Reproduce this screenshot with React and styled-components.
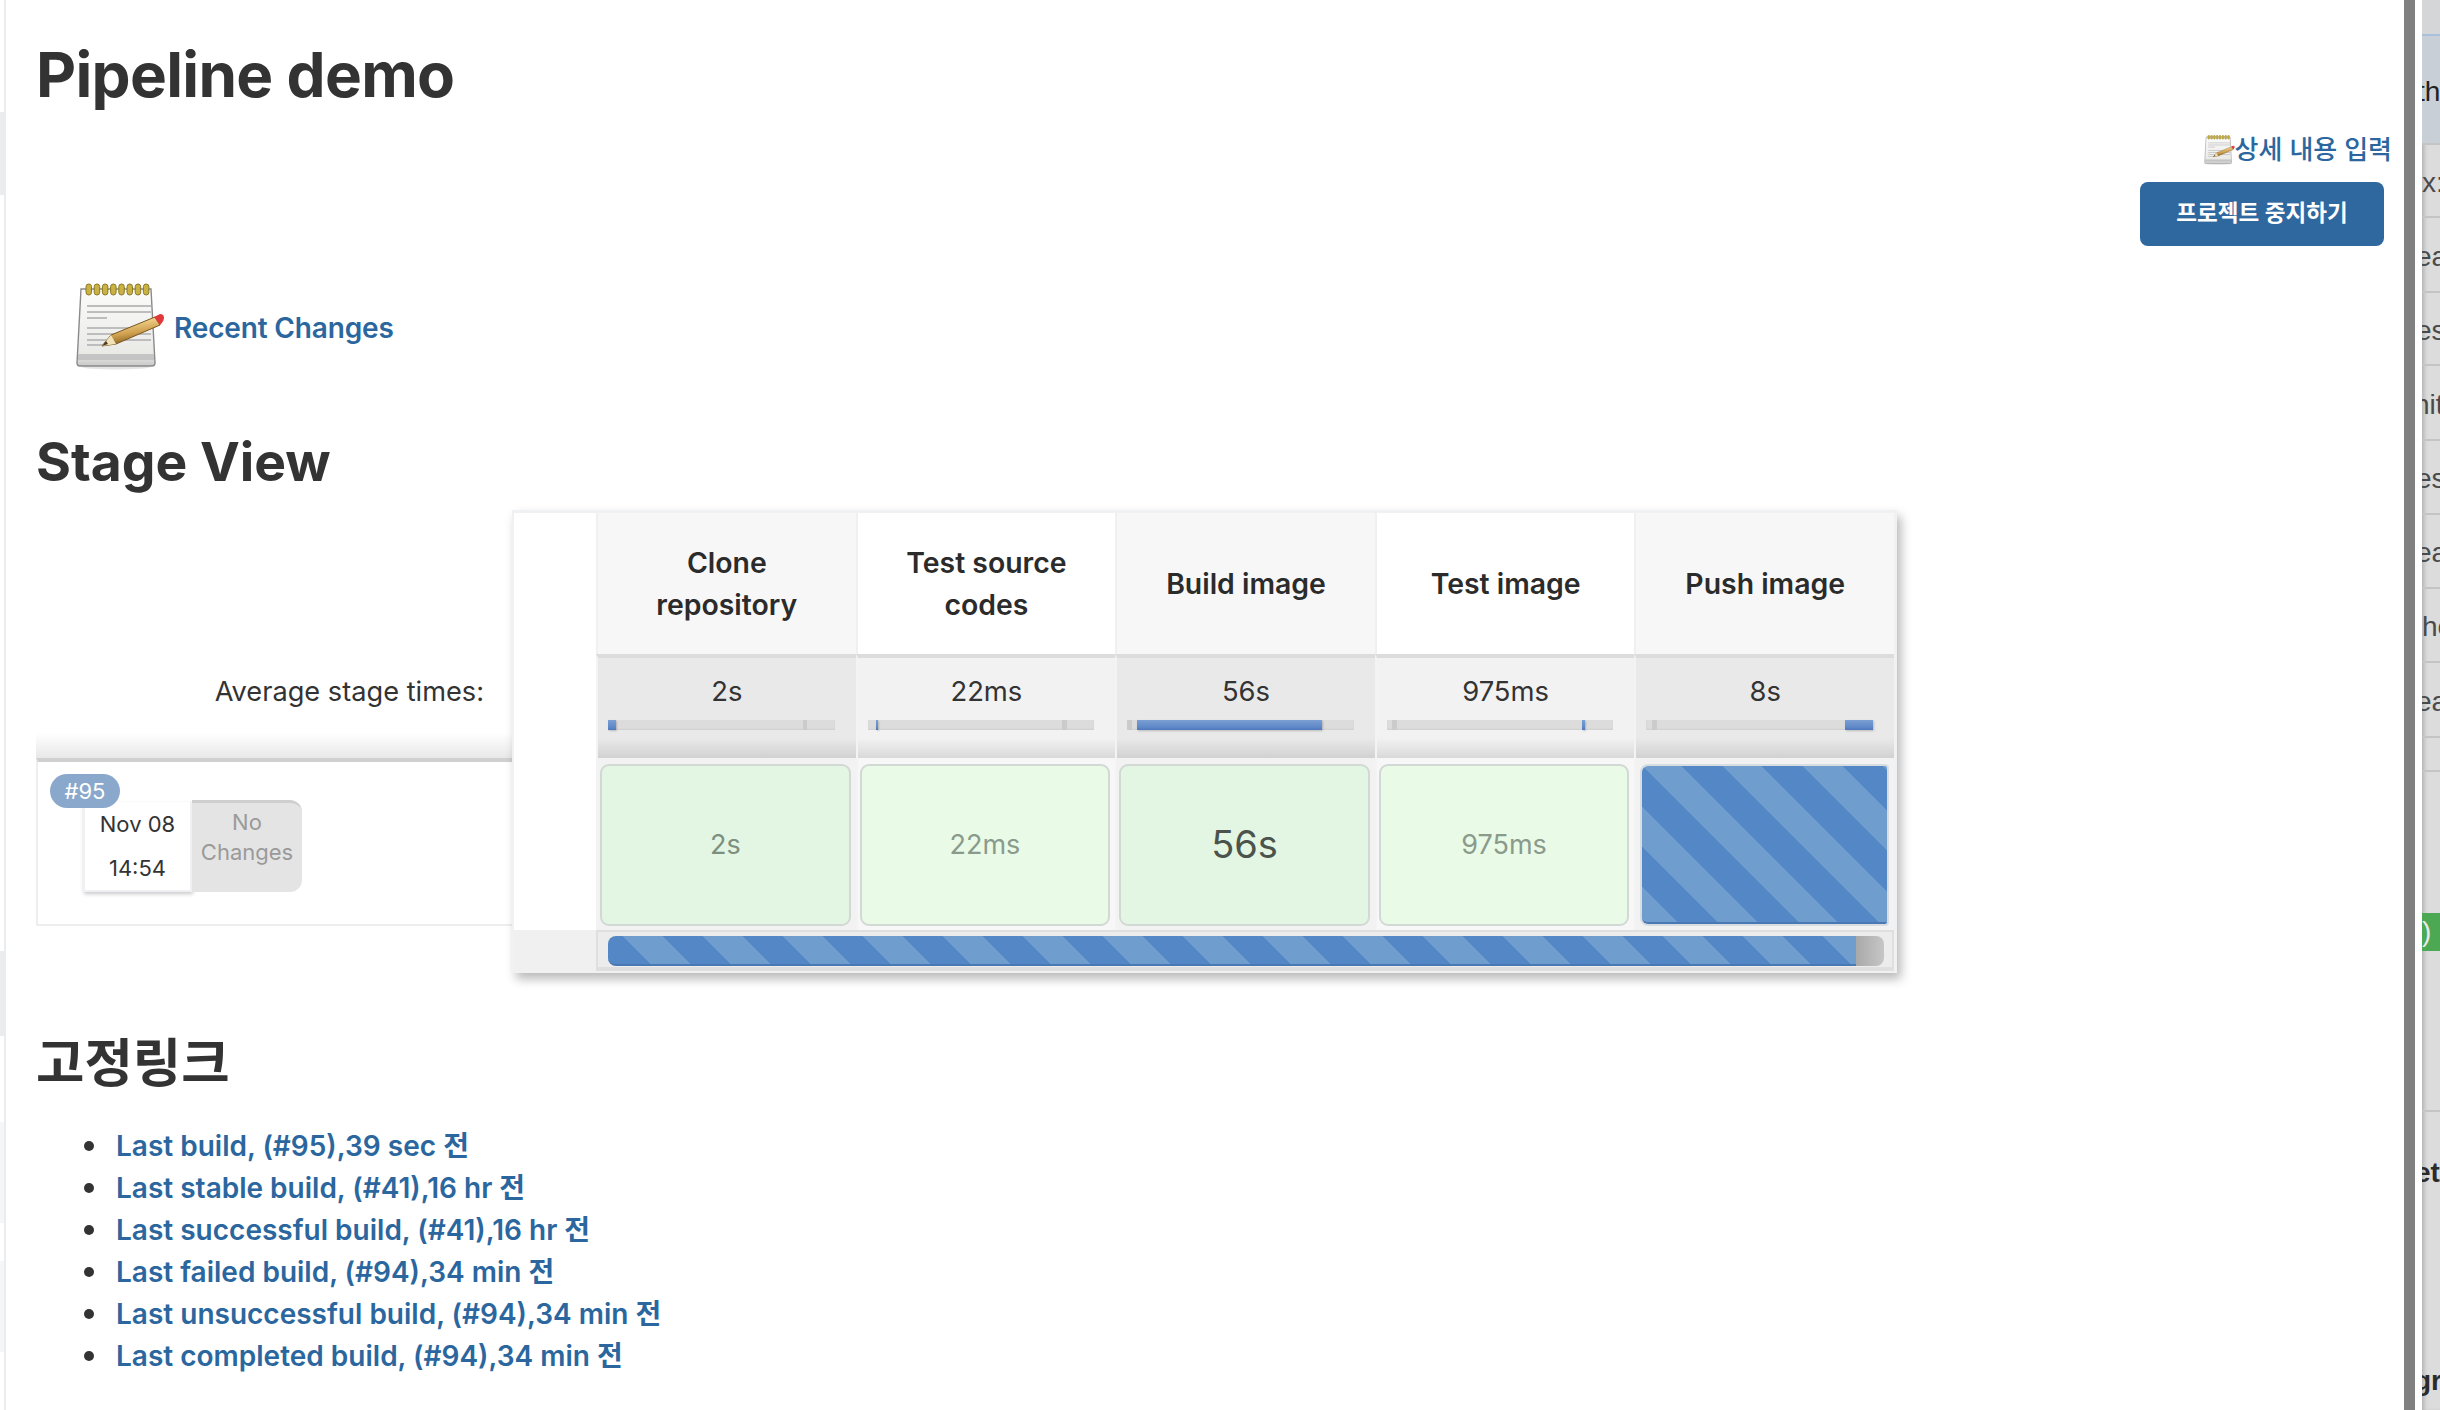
import React from "react";
import styled, { createGlobalStyle } from "styled-components";

const GlobalStyle = createGlobalStyle`
  html, body {
    margin: 0;
    padding: 0;
    background: #fff;
    overflow: hidden;
  }
  body {
    font-family: Inter, "Noto Sans CJK KR", sans-serif;
    color: #333;
  }
`;

const Page = styled.div`
  display: flex;
  width: 2440px;
  height: 1410px;
  overflow: hidden;
`;

const EdgeStrip = styled.div`
  width: 6px;
  flex: none;
  box-sizing: border-box;
  border-right: 2px solid #e9edf0;
  display: flex;
  flex-direction: column;
`;

const EdgePatch = styled.div`
  height: ${props => props.$h}px;
  background: ${props => props.$bg || "#fff"};
`;

const Main = styled.main`
  flex: 1;
  min-width: 0;
  padding: 37px 12px 0 30px;
`;

const PageTitle = styled.h1`
  margin: 0;
  font-size: 62px;
  line-height: 76px;
  font-weight: 700;
  letter-spacing: -0.7px;
`;

const Actions = styled.div`
  margin-top: 21px;
  display: flex;
  flex-direction: column;
  align-items: flex-end;
`;

const EditLink = styled.a`
  display: flex;
  align-items: center;
  color: #2b679e;
  font-size: 26px;
  font-weight: 500;
  line-height: 32px;
  height: 32px;
`;

const StopButton = styled.button`
  margin: 16px 8px 0 0;
  width: 244px;
  height: 64px;
  border: 0;
  border-radius: 8px;
  padding: 0 0 6px;
  background: #2f689f;
  color: #fff;
  font-family: inherit;
  font-size: 22.5px;
  font-weight: 600;
`;

const RecentRow = styled.div`
  margin: 37px 0 0 39px;
  display: flex;
  align-items: center;
  gap: 9px;
`;

const RecentLink = styled.a`
  color: #2b679e;
  font-size: 28px;
  font-weight: 600;
  letter-spacing: -0.15px;
  line-height: 36px;
  margin-top: 3px;
`;

const SectionTitle = styled.h2`
  margin: ${props => props.$top}px 0 0;
  font-size: ${props => props.$size}px;
  line-height: 64px;
  font-weight: 700;
`;

const StageSection = styled.section`
  margin-top: 16px;
  display: flex;
  align-items: flex-start;
`;

const BuildSide = styled.div`
  width: 476px;
  flex: none;
  padding-top: 165px;
`;

const AverageLabel = styled.div`
  text-align: right;
  padding-right: 28px;
  font-size: 27.2px;
  line-height: 34px;
  height: 55px;
`;

const RowFade = styled.div`
  height: 28px;
  background: linear-gradient(#fff 10%, #e8e8e8);
`;

const BuildRow = styled.div`
  height: 168px;
  box-sizing: border-box;
  border-top: 4px solid #d0d0d0;
  border-left: 2px solid #eee;
  border-bottom: 2px solid #eee;
  padding: 12px 0 0 12px;
`;

const BuildBadge = styled.div`
  position: relative;
  z-index: 1;
  width: 70px;
  height: 34px;
  border-radius: 17px;
  background: #8aa8cb;
  color: #fff;
  font-size: 22px;
  line-height: 34px;
  text-align: center;
`;

const BuildCard = styled.div`
  display: flex;
  margin: -6px 0 0 33px;
`;

const DateBox = styled.div`
  width: 109px;
  height: 90px;
  box-sizing: border-box;
  background: #fff;
  border: 2px solid #eef0f3;
  border-top: 0;
  box-shadow: 1px 2px 4px rgba(0, 0, 0, 0.22);
  text-align: center;
  font-size: 22px;
  line-height: 44px;
`;

const ChangesBox = styled.div`
  width: 110px;
  height: 92px;
  margin-top: -2px;
  box-sizing: border-box;
  background: #e4e4e4;
  border-top: 3px solid #cfcfcf;
  border-radius: 0 12px 12px 0;
  color: #9a9a9a;
  text-align: center;
  font-size: 22px;
  line-height: 30px;
  padding-top: 4px;
`;

const Panel = styled.div`
  flex: none;
  width: 1385px;
  height: 463px;
  box-sizing: border-box;
  border: solid #f0f1f3;
  border-width: 3px 3px 2px 2px;
  background: #fff;
  box-shadow: 4px 6px 10px rgba(0, 0, 0, 0.28);
  display: grid;
  grid-template-columns: 82px repeat(5, 1fr);
  grid-template-rows: 141px 104px 172px 41px;
`;

const CornerCell = styled.div`
  grid-column: 1;
  grid-row: 1 / span 3;
  background: #fff;
`;

const HeadCell = styled.div`
  display: flex;
  align-items: center;
  justify-content: center;
  text-align: center;
  padding: 0 20px;
  background: ${props => (props.$odd ? "#f7f7f7" : "#fff")};
  border-left: 2px solid #f0f0f0;
  font-size: 28.4px;
  font-weight: 600;
  line-height: 42px;
  color: #2b2b2b;
`;

const AvgCell = styled.div`
  box-sizing: border-box;
  background:
    linear-gradient(rgba(0, 0, 0, 0) 80px, rgba(0, 0, 0, 0.1) 100%),
    ${props => (props.$odd ? "#e9e9e9" : "#f2f2f2")};
  border-top: 4px solid #dcdcdc;
  border-left: 2px solid #f3f3f3;
  text-align: center;
  font-size: 27.4px;
  line-height: 34px;
  padding-top: 16px;
`;

const Track = styled.div`
  position: relative;
  margin: 12px 21px 0 10px;
  height: 10px;
  background: #dcdcdc;
  box-shadow: inset 0 -1px 2px rgba(0, 0, 0, 0.06);
`;

const TrackMark = styled.div`
  position: absolute;
  top: 0;
  bottom: 0;
  background: #cbcbcb;
`;

const TrackFill = styled.div`
  position: absolute;
  top: 0;
  bottom: 0;
  background: linear-gradient(#7b9fd2, #5f89c9 70%, #4f78bb);
  box-shadow: 1px 1px 2px rgba(0, 0, 0, 0.2);
`;

const StageCell = styled.div`
  background: ${props => (props.$odd ? "#f2f2f2" : "#f7f7f7")};
  border-left: 2px solid #f3f3f3;
  padding: 6px 5px 4px 2px;
  display: flex;
`;

const StageBox = styled.div`
  flex: 1;
  box-sizing: border-box;
  display: flex;
  align-items: center;
  justify-content: center;
  padding-bottom: 2px;
  border: 2px solid #d2d8d4;
  border-radius: 9px;
  background: ${props => props.$bg};
  color: ${props => props.$ink};
  font-size: ${props => props.$size}px;
`;

const RunningBox = styled.div`
  flex: 1;
  border-radius: 6px 2px 2px 6px;
  background: repeating-linear-gradient(45deg, #6e9dce 0 25.45px, #5487c5 25.45px 53.74px, #6e9dce 53.74px 56.57px);
  border-bottom: 2px solid #4a78b4;
  box-shadow: 0 0 0 2px #d8dde2;
  margin: 2px 2px 2px 4px;
`;

const FootCorner = styled.div`
  background: #f0f0f0;
`;

const FootBar = styled.div`
  grid-column: 2 / span 5;
  background: #ececec;
  border: 2px solid #dfdfdf;
  border-bottom-width: 4px;
  padding: 4px 8px 2px 10px;
  display: flex;
`;

const FootProgress = styled.div`
  flex: 1;
  height: 30px;
  border-radius: 8px 0 0 8px;
  background: repeating-linear-gradient(45deg, #6e9dce 0 2.08px, #5487c5 2.08px 30.36px, #6e9dce 30.36px 56.57px);
  border-bottom: 2px solid #4a78b4;
  box-sizing: border-box;
`;

const FootRest = styled.div`
  width: 28px;
  height: 30px;
  border-radius: 0 8px 8px 0;
  background: linear-gradient(90deg, #a9a9a9, #c6c6c6);
`;

const LinkList = styled.ul`
  margin: 30px 0 0;
  padding: 0 0 0 48px;
  list-style: none;
  font-size: 28px;
  line-height: 42px;
  font-weight: 600;
`;

const LinkItem = styled.li`
  display: flex;
  align-items: center;

  &::before {
    content: "";
    width: 10px;
    height: 10px;
    border-radius: 50%;
    background: #333;
    margin-right: 22px;
  }
`;

const PermaLink = styled.a`
  color: #2b679e;
`;

const Divider = styled.div`
  width: 11px;
  flex: none;
  background: #808080;
`;

const Gap = styled.div`
  width: 7px;
  flex: none;
  background: #fff;
`;

const Peek = styled.aside`
  flex: none;
  width: 18px;
  overflow: hidden;
  background: #dcdcdc;
  box-shadow: inset 4px 0 4px -2px rgba(0, 0, 0, 0.2);
  display: flex;
  flex-direction: column;
  font-family: "Liberation Sans", sans-serif;
  font-size: 28px;
  color: #4a4a4a;
`;

const PeekRow = styled.div`
  height: ${props => props.$h}px;
  flex: none;
  box-sizing: border-box;
  display: flex;
  align-items: center;
  padding-top: ${props => (props.$h > 60 ? 4 : 0)}px;
  white-space: nowrap;
  text-indent: ${props => props.$indent || 0}px;
  background: ${props => props.$bg || "transparent"};
  color: ${props => props.$ink || "inherit"};
  font-weight: ${props => (props.$bold ? 700 : 400)};
  border-bottom: ${props => (props.$line ? `2px solid ${props.$line}` : "0")};
`;

function NoteIcon({ size }) {
  const rings = [0, 1, 2, 3, 4, 5, 6, 7];
  const lines = [
    [12, 22, 70],
    [12, 28, 70],
    [12, 34, 26],
    [12, 44, 70],
    [12, 50, 70],
    [12, 56, 70],
    [12, 61, 26],
  ];
  return (
    <svg width={size} height={(size * 87) / 90} viewBox="0 0 90 87">
      <defs>
        <linearGradient id="noteBody" x1="0" y1="0" x2="0" y2="1">
          <stop offset="0" stopColor="#fbfbfb" />
          <stop offset="0.85" stopColor="#e9e9e6" />
          <stop offset="1" stopColor="#c8c8c8" />
        </linearGradient>
        <linearGradient id="pencilBody" x1="0.35" y1="0" x2="0.65" y2="1">
          <stop offset="0.2" stopColor="#efd089" />
          <stop offset="0.55" stopColor="#cfa04e" />
          <stop offset="0.85" stopColor="#8f6628" />
        </linearGradient>
      </defs>
      <ellipse cx="41" cy="84" rx="34" ry="2.5" fill="#000" opacity="0.1" />
      <path d="M6 6h70l4 74q0 3-3 3H5q-3 0-3-3z" fill="url(#noteBody)" stroke="#8a8a8a" strokeWidth="1.4" />
      <rect x="3" y="71" width="76" height="6" fill="#c4c4c4" />
      {lines.map(l => (
        <rect key={l[1]} x={l[0]} y={l[1]} width={l[2] - 6} height="2" fill="#bdbdbd" />
      ))}
      {rings.map(i => (
        <rect key={i} x={11 + i * 8.2} y="1" width="5.5" height="11" rx="2.7" fill="#c9b144" stroke="#8c7a22" strokeWidth="1" />
      ))}
      <path d="M27 63l9-11 44-18 5 8-44 19z" fill="url(#pencilBody)" stroke="#7a5620" strokeWidth="1" />
      <path d="M27 63l9-11 5 9z" fill="#f2e2b8" />
      <path d="M27 63l4-5 2 3z" fill="#4a3a20" />
      <path d="M79 34l6-3q4 0 4 4 0 3-3 6l-1 1z" fill="#e0393b" />
    </svg>
  );
}

const stages = [
  { name: ["Clone", "repository"], avg: "2s", mark: 86, fillAt: 0, fill: 3.5, box: "#e3f6e3", ink: "#7d8f7f", size: 27 },
  { name: ["Test source", "codes"], avg: "22ms", mark: 86, fillAt: 3.5, fill: 1, box: "#e9fbe7", ink: "#8a9a8c", size: 27 },
  { name: ["Build image"], avg: "56s", mark: 0, fillAt: 4.4, fill: 81.5, box: "#e3f6e3", ink: "#4b534c", size: 38 },
  { name: ["Test image"], avg: "975ms", mark: 2.5, fillAt: 86, fill: 1.4, box: "#e9fbe7", ink: "#8a9a8c", size: 27 },
  { name: ["Push image"], avg: "8s", mark: 2.5, fillAt: 87.7, fill: 12.3, running: true },
];

const peekRows = [
  { h: 36, bg: "#d4d6d8", line: "#a9c0dc" },
  { h: 109, bg: "#c9cfd6", text: "th", indent: -5, ink: "#222", line: "#c4c4c4" },
  { h: 73, text: "x:", line: "#c4c4c4" },
  { h: 75, text: "ea", indent: -6, line: "#c4c4c4" },
  { h: 73, text: "es", indent: -6, line: "#c4c4c4" },
  { h: 75, text: "nit", indent: -8, line: "#c4c4c4" },
  { h: 74, text: "es", indent: -6, line: "#c4c4c4" },
  { h: 74, text: "ea", indent: -6, line: "#c4c4c4" },
  { h: 74, text: "he", line: "#c4c4c4" },
  { h: 75, text: "ea", indent: -6, line: "#c4c4c4" },
  { h: 34, line: "#c4c4c4" },
  { h: 141 },
  { h: 38, bg: "#4ca852", text: ")", ink: "#e9e9e9" },
  { h: 161, line: "#c4c4c4" },
  { h: 118, text: "et", indent: -7, bold: true, ink: "#2b2b2b" },
  { h: 298, text: "gr", indent: -8, bold: true, ink: "#2b2b2b" },
];

const links = [
  "Last build, (#95),39 sec 전",
  "Last stable build, (#41),16 hr 전",
  "Last successful build, (#41),16 hr 전",
  "Last failed build, (#94),34 min 전",
  "Last unsuccessful build, (#94),34 min 전",
  "Last completed build, (#94),34 min 전",
];

export default function App() {
  return (
    <>
      <GlobalStyle />
      <Page>
        <EdgeStrip>
          <EdgePatch $h={112} />
          <EdgePatch $h={83} $bg="#e9edf0" />
          <EdgePatch $h={756} />
          <EdgePatch $h={85} $bg="#e9edf0" />
          <EdgePatch $h={86} />
          <EdgePatch $h={101} $bg="#f5f6f7" />
          <EdgePatch $h={38} />
          <EdgePatch $h={91} $bg="#f5f6f7" />
        </EdgeStrip>
        <Main>
          <PageTitle>Pipeline demo</PageTitle>
          <Actions>
            <EditLink>
              <NoteIcon size={31} />
              상세 내용 입력
            </EditLink>
            <StopButton>프로젝트 중지하기</StopButton>
          </Actions>
          <RecentRow>
            <NoteIcon size={90} />
            <RecentLink>Recent Changes</RecentLink>
          </RecentRow>
          <SectionTitle $top={60} $size={53.4}>Stage View</SectionTitle>
          <StageSection>
            <BuildSide>
              <AverageLabel>Average stage times:</AverageLabel>
              <RowFade />
              <BuildRow>
                <BuildBadge>#95</BuildBadge>
                <BuildCard>
                  <DateBox>
                    Nov 08
                    <br />
                    14:54
                  </DateBox>
                  <ChangesBox>
                    No
                    <br />
                    Changes
                  </ChangesBox>
                </BuildCard>
              </BuildRow>
            </BuildSide>
            <Panel>
              <CornerCell />
              {stages.map((s, i) => (
                <HeadCell key={s.avg} $odd={i % 2 === 0} style={{ gridColumn: i + 2, gridRow: 1 }}>
                  <div>
                    {s.name[0]}
                    {s.name[1] && <br />}
                    {s.name[1]}
                  </div>
                </HeadCell>
              ))}
              {stages.map((s, i) => (
                <AvgCell key={s.avg} $odd={i % 2 === 0} style={{ gridColumn: i + 2, gridRow: 2 }}>
                  {s.avg}
                  <Track>
                    <TrackMark style={{ left: `${s.mark}%`, width: "2%" }} />
                    <TrackFill style={{ left: `${s.fillAt}%`, width: `${s.fill}%` }} />
                  </Track>
                </AvgCell>
              ))}
              {stages.map((s, i) => (
                <StageCell key={s.avg} $odd={i % 2 === 0} style={{ gridColumn: i + 2, gridRow: 3 }}>
                  {s.running ? (
                    <RunningBox />
                  ) : (
                    <StageBox $bg={s.box} $ink={s.ink} $size={s.size}>
                      {s.avg}
                    </StageBox>
                  )}
                </StageCell>
              ))}
              <FootCorner />
              <FootBar>
                <FootProgress />
                <FootRest />
              </FootBar>
            </Panel>
          </StageSection>
          <SectionTitle $top={58} $size={52.6}>고정링크</SectionTitle>
          <LinkList>
            {links.map(l => (
              <LinkItem key={l}>
                <PermaLink>{l}</PermaLink>
              </LinkItem>
            ))}
          </LinkList>
        </Main>
        <Divider />
        <Gap />
        <Peek>
          {peekRows.map((r, i) => (
            <PeekRow key={i} $h={r.h} $bg={r.bg} $ink={r.ink} $line={r.line} $bold={r.bold} $indent={r.indent}>
              {r.text}
            </PeekRow>
          ))}
        </Peek>
      </Page>
    </>
  );
}
